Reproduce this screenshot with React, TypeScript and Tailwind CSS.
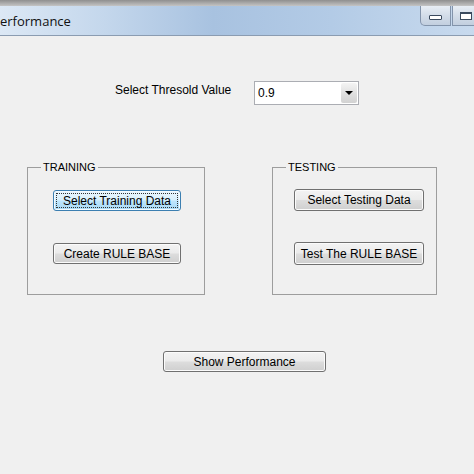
import React from 'react';

const font = { fontFamily: '"Liberation Sans", Arial, sans-serif' };

const btnBase =
  'relative flex items-center justify-center rounded-[3px] border text-[12px] leading-none text-black';
const btnGray =
  'border-[#707070] bg-[linear-gradient(to_bottom,#f3f3f3_0%,#ebebeb_48%,#dddddd_52%,#cfcfcf_100%)] shadow-[inset_0_0_0_1px_#fbfbfb]';
const btnBlue =
  'border-[#3c7fb1] bg-[linear-gradient(to_bottom,#eaf6fd_0%,#d9f0fc_48%,#bee6fd_52%,#a7d9f5_100%)] shadow-[inset_0_0_0_1px_#f4fbff]';

function WinButton({
  label,
  className,
  focused,
}: {
  label: string;
  className: string;
  focused?: boolean;
}) {
  return (
    <button className={`${btnBase} ${focused ? btnBlue : btnGray} ${className}`}>
      {focused && (
        <span className="pointer-events-none absolute inset-[2px] border border-dotted border-[#333]" />
      )}
      <span className="relative">{label}</span>
    </button>
  );
}

function GroupBox({
  title,
  className,
  children,
}: {
  title: string;
  className: string;
  children: React.ReactNode;
}) {
  return (
    <div className={`relative border border-[#9d9d9d] ${className}`}>
      {/* legend sits on the top border */}
      <span className="absolute -top-[8px] left-[13px] bg-[#f0f0f0] px-[2px] text-[11px] leading-[14px] text-black">
        {title}
      </span>
      {children}
    </div>
  );
}

export default function App() {
  return (
    <div className="flex h-[474px] w-[474px] flex-col overflow-hidden bg-[#f0f0f0]" style={font}>
      {/* window frame top */}
      <div className="h-[6px] bg-[linear-gradient(to_bottom,#8f8f8f,#c4c4c4)]" />
      <div className="flex h-[29px] justify-between bg-[linear-gradient(to_right,#dce8f5_0%,#c4d7ec_22%,#a8c2e0_45%,#b3cbe6_70%,#c8daee_100%)]">
        <span
          className="self-center pt-[3px] text-[13px] text-[#111]"
          style={{ fontFamily: '"Open Sans", "Liberation Sans", sans-serif' }}
        >
          erformance
        </span>
        <div className="flex items-start gap-[1px]">
          <div className="flex h-[20px] w-[31px] items-center justify-center rounded-bl-[5px] border border-t-0 border-[#8394ab] bg-[linear-gradient(to_bottom,#e8eef5,#d3dde9_50%,#c2cfdf)] pt-[3px]">
            <span className="h-[5px] w-[13px] rounded-[1px] border border-[#3a4a5e] bg-white" />
          </div>
          <div className="flex h-[20px] w-[22px] items-start justify-start border border-t-0 border-r-0 border-[#8394ab] bg-[linear-gradient(to_bottom,#e8eef5,#d3dde9_50%,#c2cfdf)] pl-[7px] pt-[6px]">
            <span className="h-[8px] w-[12px] border border-t-2 border-[#3a4a5e] bg-white" />
          </div>
        </div>
      </div>
      <div className="h-px bg-[#8b9cb1]" />

      {/* dialog body */}
      <div className="flex flex-1 flex-col">
        <div className="ml-[115px] mt-[45px] flex items-start">
          <span className="w-[139px] pt-[2px] text-[12px] leading-[14px] text-black">
            Select Thresold Value
          </span>
          <div className="flex h-[24px] w-[105px] items-center justify-between border border-[#abadb3] bg-white pl-[3px] pr-[1px]">
            <span className="text-[12px] text-black">0.9</span>
            <span className="flex h-[20px] w-[16px] items-center justify-center rounded-[2px] bg-[linear-gradient(to_bottom,#f4f4f4,#e1e1e1_50%,#d2d2d2)]">
              <span className="h-0 w-0 border-x-[4px] border-t-[4px] border-x-transparent border-t-black" />
            </span>
          </div>
        </div>

        <div className="mt-[62px] flex">
          <GroupBox title="TRAINING" className="ml-[27px] h-[128px] w-[178px] pl-[25px] pt-[22px]">
            <div className="flex flex-col gap-[32px]">
              <WinButton label="Select Training Data" focused className="h-[21px] w-[128px]" />
              <WinButton label="Create RULE BASE" className="h-[21px] w-[128px]" />
            </div>
          </GroupBox>
          <GroupBox title="TESTING" className="ml-[67px] h-[128px] w-[165px] pl-[21px] pt-[21px]">
            <div className="flex flex-col gap-[31px]">
              <WinButton label="Select Testing Data" className="h-[22px] w-[130px]" />
              <WinButton label="Test The RULE BASE" className="h-[23px] w-[130px]" />
            </div>
          </GroupBox>
        </div>

        <WinButton label="Show Performance" className="ml-[163px] mt-[56px] h-[21px] w-[163px]" />
      </div>
    </div>
  );
}
